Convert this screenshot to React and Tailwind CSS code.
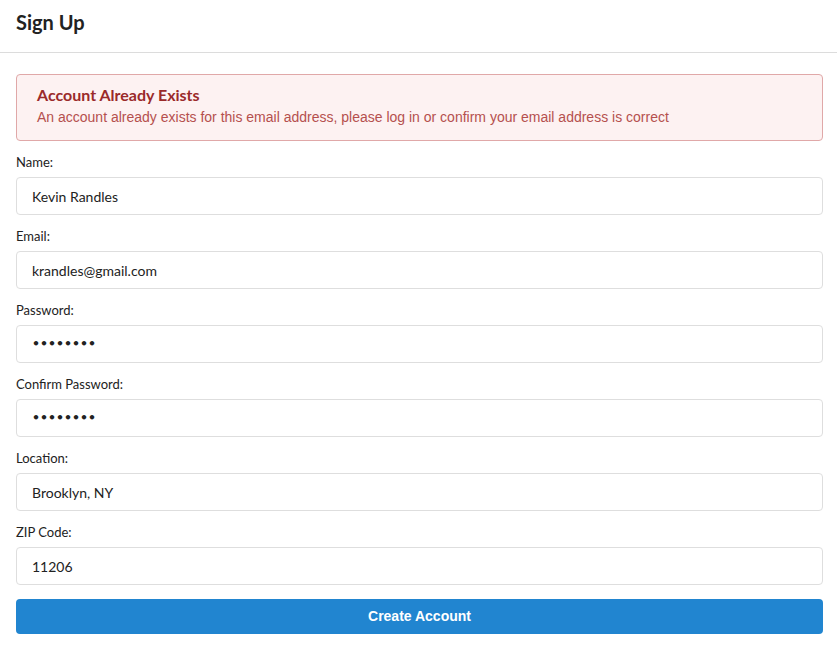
import React from "react";

const fields = [
  { label: "Name:", value: "Kevin Randles", type: "text" },
  { label: "Email:", value: "krandles@gmail.com", type: "text" },
  { label: "Password:", value: "••••••••", type: "password" },
  { label: "Confirm Password:", value: "••••••••", type: "password" },
  { label: "Location:", value: "Brooklyn, NY", type: "text" },
  { label: "ZIP Code:", value: "11206", type: "text" },
];

export default function App() {
  return (
    <div className="min-h-screen bg-white font-['Lato',sans-serif] text-[#222]">
      {/* Header */}
      <div className="h-[53px] border-b border-[#dcdcdc] pl-4 flex items-center pb-[8px]">
        <h1 className="text-[20px] font-bold text-[#222]">Sign Up</h1>
      </div>

      <div className="pl-4 pr-[14px] pt-[21px]">
        {/* Error */}
        <div className="h-[67px] rounded-[4px] border border-[#e0a8a8] bg-[#fdf2f2] pl-[20px] pt-[10px]">
          <div className="text-[16px] font-bold leading-[20px] text-[#9a2a2a]">
            Account Already Exists
          </div>
          <p className="mt-[2px] font-['Liberation_Sans',Arial,sans-serif] text-[14px] leading-[20px] text-[#b5504e]">
            An account already exists for this email address, please log in or confirm your email address is correct
          </p>
        </div>

        {/* Fields */}
        <div className="mt-[13px] flex flex-col gap-[13px]">
          {fields.map((f) => (
            <div key={f.label} className="flex flex-col">
              <label className="text-[13px] leading-[16px] text-[#222] mb-[7px]">{f.label}</label>
              <div className="h-[38px] rounded-[4px] border border-[#dedede] bg-white pl-[15px] flex items-center">
                {f.type === "password" ? (
                  <span className="text-[12.5px] font-bold text-[#222] font-['DejaVu_Sans',sans-serif]">
                    {f.value}
                  </span>
                ) : (
                  <span className="text-[14px] text-[#222]">{f.value}</span>
                )}
              </div>
            </div>
          ))}
        </div>

        <button className="mt-[14px] h-[35px] w-full rounded-[4px] bg-[#2185d0] font-['Liberation_Sans',Arial,sans-serif] text-[14px] font-bold text-white">
          Create Account
        </button>
      </div>
    </div>
  );
}
